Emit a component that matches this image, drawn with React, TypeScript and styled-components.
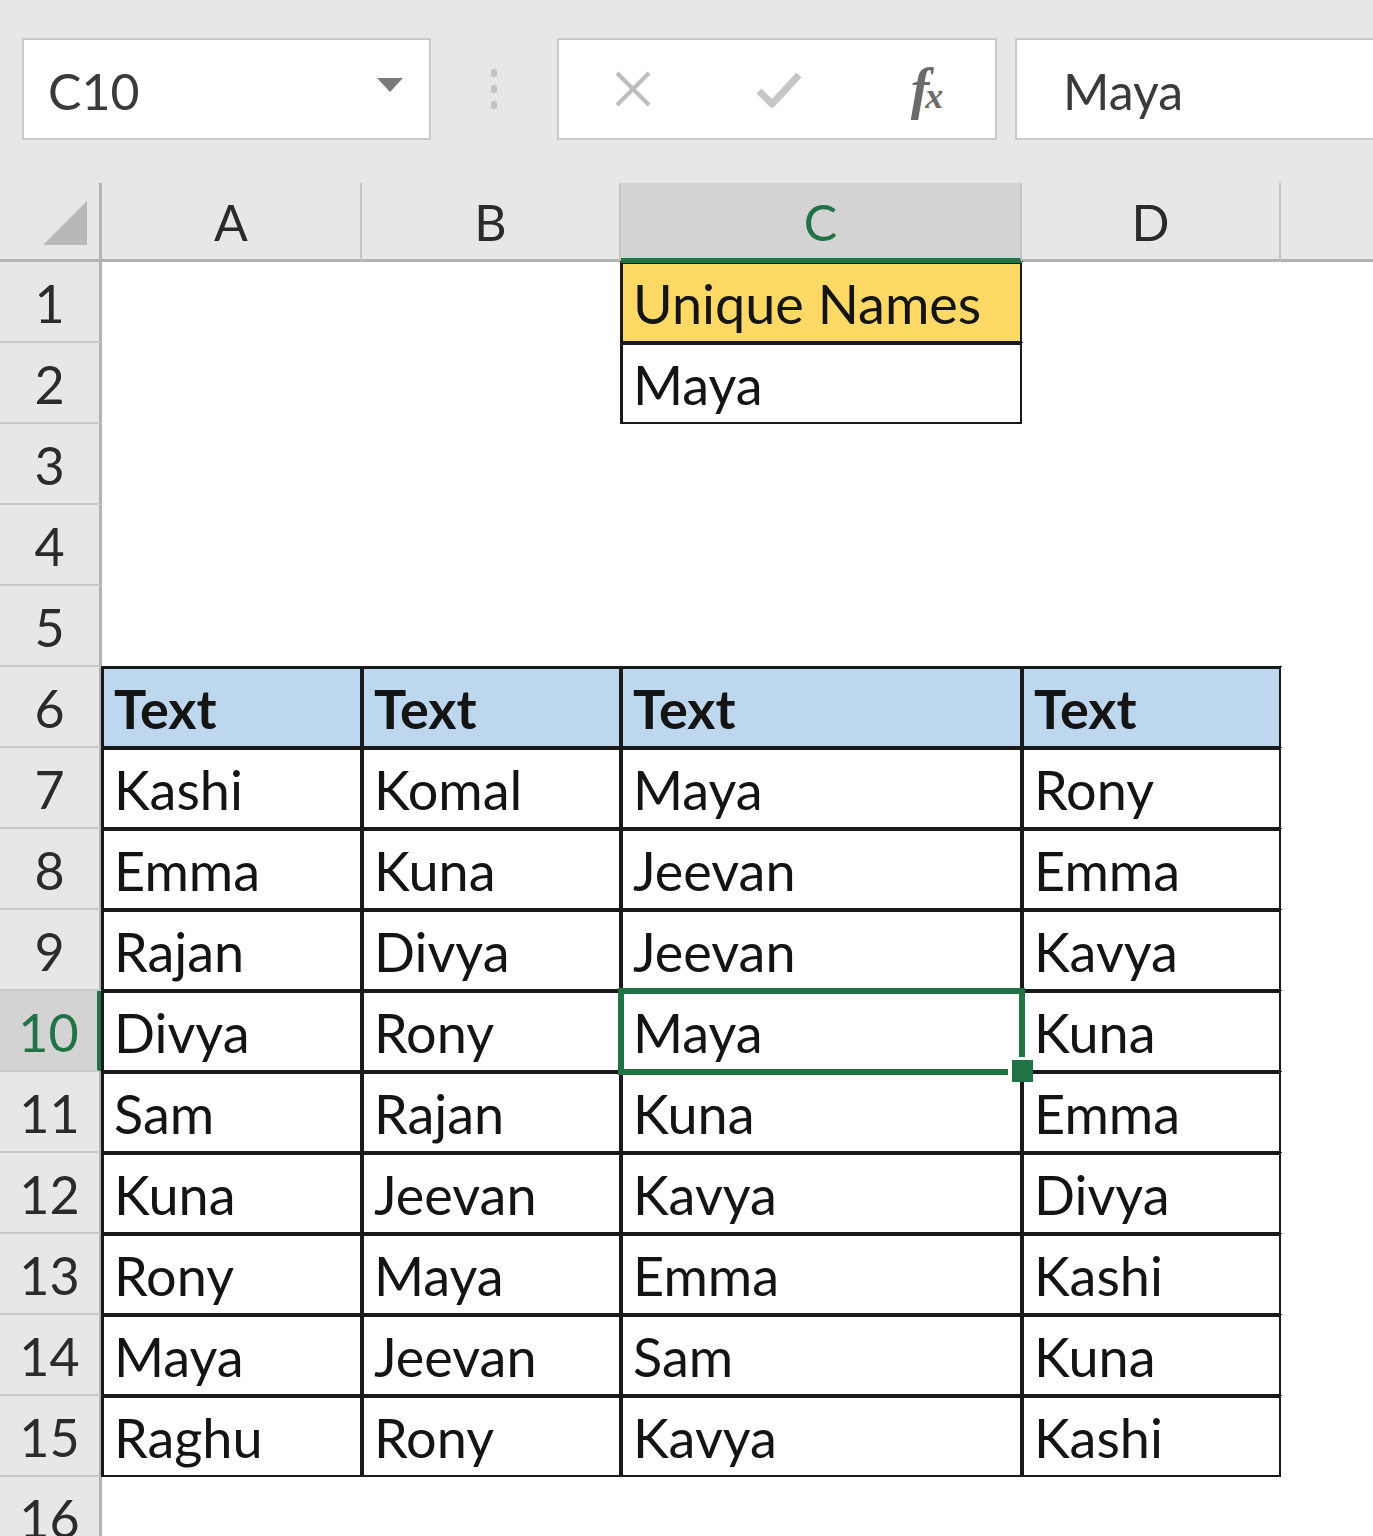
import React from "react";
import styled, { createGlobalStyle, css } from "styled-components";

const GlobalStyle = createGlobalStyle`
  html, body { margin: 0; padding: 0; background: #ffffff; }
  body { font-family: "Lato", "Open Sans", sans-serif; overflow: hidden; }
  * { box-sizing: border-box; }
`;

const GREEN = "#217346";

const Page = styled.div`
  width: 1373px;
  height: 1536px;
  overflow: hidden;
  background: #ffffff;
`;

const FormulaBar = styled.div`
  display: flex;
  align-items: stretch;
  height: 183px;
  padding: 38px 0 43px 22px;
  background: #e7e7e7;
`;

const Box = styled.div`
  background: #ffffff;
  border: 2px solid #c9c9c9;
  display: flex;
  align-items: center;
`;

const NameBox = styled(Box)`
  width: 409px;
  padding: 0 26px 0 24px;
  justify-content: space-between;
`;

const BarText = styled.span`
  font-family: "Lato", sans-serif;
  font-size: 50px;
  color: #3a3a3a;
  line-height: 1;
  padding-top: 4px;
`;

const DropArrow = styled.span`
  width: 0;
  height: 0;
  border-left: 13px solid transparent;
  border-right: 13px solid transparent;
  border-top: 14px solid #7a7a7a;
  margin-top: -8px;
`;

const Grip = styled.div`
  width: 126px;
  display: flex;
  flex-direction: column;
  align-items: center;
  justify-content: center;
  gap: 8px;
`;

const GripDot = styled.span`
  width: 6px;
  height: 8px;
  border-radius: 2px;
  background: #c2c2c2;
`;

const ButtonGroup = styled(Box)`
  width: 440px;
  padding: 0 46px 0 50px;
  justify-content: space-between;
`;

const IconSlot = styled.span`
  display: flex;
  align-items: center;
  justify-content: center;
  width: 48px;
  height: 60px;
`;

const Fx = styled.span`
  font-family: "Liberation Serif", "DejaVu Serif", serif;
  font-style: italic;
  font-weight: bold;
  font-size: 56px;
  color: #6b6b6b;
  line-height: 1;
  letter-spacing: -4px;
  & > small {
    font-size: 36px;
  }
`;

const FormulaInput = styled(Box)`
  flex: 1;
  margin-left: 18px;
  padding-left: 46px;
  border-right: none;
`;

const Sheet = styled.div`
  display: grid;
  grid-template-columns: 102px 260px 259px 401px 259px 1fr;
  grid-template-rows: 79px;
  grid-auto-rows: 81px;
`;

const Corner = styled.div`
  background: #e7e7e7;
  border-right: 3px solid #b3b3b3;
  border-bottom: 3px solid #b3b3b3;
  display: flex;
  align-items: flex-end;
  justify-content: flex-end;
  padding: 0 12px 14px 0;
`;

const SelectAll = styled.span`
  width: 0;
  height: 0;
  border-left: 44px solid transparent;
  border-bottom: 44px solid #b8b8b8;
`;

const ColHeader = styled.div<{ $active?: boolean; $last?: boolean }>`
  background: #e7e7e7;
  border-right: ${(p) => (p.$last ? "none" : "2px solid #c4c4c4")};
  border-bottom: 3px solid #b3b3b3;
  display: flex;
  align-items: center;
  justify-content: center;
  font-size: 50px;
  color: #2b2b2b;
  padding-top: 2px;
  ${(p) =>
    p.$active &&
    css`
      position: relative;
      z-index: 2;
      background: #d3d3d3;
      color: ${GREEN};
      border-bottom: 5px solid ${GREEN};
      margin-bottom: -1px;
    `}
`;

const RowHeader = styled.div<{ $active?: boolean }>`
  background: #e7e7e7;
  border-right: 3px solid #b3b3b3;
  border-bottom: 2px solid #c9c9c9;
  display: flex;
  align-items: center;
  justify-content: center;
  font-size: 52px;
  color: #2b2b2b;
  padding-top: 2px;
  ${(p) =>
    p.$active &&
    css`
      background: #d3d3d3;
      color: ${GREEN};
      border-right: 5px solid ${GREEN};
    `}
`;

const fills: Record<string, string> = {
  gold: "#ffd966",
  blue: "#bdd7ee",
};

const Cell = styled.div<{
  $bordered?: boolean;
  $fill?: "gold" | "blue";
  $bold?: boolean;
  $selected?: boolean;
}>`
  display: flex;
  align-items: center;
  padding: 2px 0 0 12px;
  font-size: 54px;
  color: #141414;
  white-space: nowrap;
  background: ${(p) => (p.$fill ? fills[p.$fill] : "#ffffff")};
  font-weight: ${(p) => (p.$bold ? 700 : 400)};
  ${(p) =>
    p.$bordered &&
    css`
      outline: 3px solid #1a1a1a;
      outline-offset: -2px;
    `}
  ${(p) =>
    p.$selected &&
    css`
      position: relative;
    `}
`;

const Selection = styled.span`
  position: absolute;
  inset: -3px;
  border: 6px solid ${GREEN};
  z-index: 3;
  pointer-events: none;
`;

const FillHandle = styled.span`
  position: absolute;
  right: -11px;
  bottom: -10px;
  width: 25px;
  height: 25px;
  background: ${GREEN};
  border-top: 3px solid #ffffff;
  border-left: 4px solid #ffffff;
  z-index: 4;
`;

type CellData = { text: string; bordered?: boolean; fill?: "gold" | "blue"; bold?: boolean };

const body: string[][] = [
  ["Kashi", "Komal", "Maya", "Rony"],
  ["Emma", "Kuna", "Jeevan", "Emma"],
  ["Rajan", "Divya", "Jeevan", "Kavya"],
  ["Divya", "Rony", "Maya", "Kuna"],
  ["Sam", "Rajan", "Kuna", "Emma"],
  ["Kuna", "Jeevan", "Kavya", "Divya"],
  ["Rony", "Maya", "Emma", "Kashi"],
  ["Maya", "Jeevan", "Sam", "Kuna"],
  ["Raghu", "Rony", "Kavya", "Kashi"],
];

const empty = (): CellData[] => [{ text: "" }, { text: "" }, { text: "" }, { text: "" }, { text: "" }];

const rows: CellData[][] = [];
rows.push([{ text: "" }, { text: "" }, { text: "Unique Names", bordered: true, fill: "gold" }, { text: "" }, { text: "" }]);
rows.push([{ text: "" }, { text: "" }, { text: "Maya", bordered: true }, { text: "" }, { text: "" }]);
rows.push(empty(), empty(), empty());
rows.push([
  ...["Text", "Text", "Text", "Text"].map((t) => ({ text: t, bordered: true, fill: "blue" as const, bold: true })),
  { text: "" },
]);
body.forEach((r) => rows.push([...r.map((t) => ({ text: t, bordered: true })), { text: "" }]));
rows.push(empty());

const columns = ["A", "B", "C", "D", ""];

export default function App() {
  return (
    <Page>
      <GlobalStyle />
      <FormulaBar>
        <NameBox>
          <BarText>C10</BarText>
          <DropArrow />
        </NameBox>
        <Grip>
          <GripDot />
          <GripDot />
          <GripDot />
        </Grip>
        <ButtonGroup>
          <IconSlot>
            <svg width="40" height="40" viewBox="0 0 40 40">
              <path d="M4 4 L36 36 M36 4 L4 36" stroke="#bdbdbd" strokeWidth="4" fill="none" />
            </svg>
          </IconSlot>
          <IconSlot>
            <svg width="48" height="40" viewBox="0 0 48 40">
              <path d="M4 22 L17 35 L44 6" stroke="#c6c6c6" strokeWidth="7" fill="none" strokeLinejoin="round" />
            </svg>
          </IconSlot>
          <IconSlot>
            <Fx>
              f<small>x</small>
            </Fx>
          </IconSlot>
        </ButtonGroup>
        <FormulaInput>
          <BarText>Maya</BarText>
        </FormulaInput>
      </FormulaBar>
      <Sheet>
        <Corner>
          <SelectAll />
        </Corner>
        {columns.map((c, i) => (
          <ColHeader key={i} $active={c === "C"} $last={i === columns.length - 1}>
            {c}
          </ColHeader>
        ))}
        {rows.map((r, ri) => (
          <React.Fragment key={ri}>
            <RowHeader $active={ri + 1 === 10}>{ri + 1}</RowHeader>
            {r.map((cell, ci) => {
              const selected = ri + 1 === 10 && ci === 2;
              return (
                <Cell
                  key={ci}
                  $bordered={cell.bordered}
                  $fill={cell.fill}
                  $bold={cell.bold}
                  $selected={selected}
                >
                  {cell.text}
                  {selected && (
                    <>
                      <Selection />
                      <FillHandle />
                    </>
                  )}
                </Cell>
              );
            })}
          </React.Fragment>
        ))}
      </Sheet>
    </Page>
  );
}
